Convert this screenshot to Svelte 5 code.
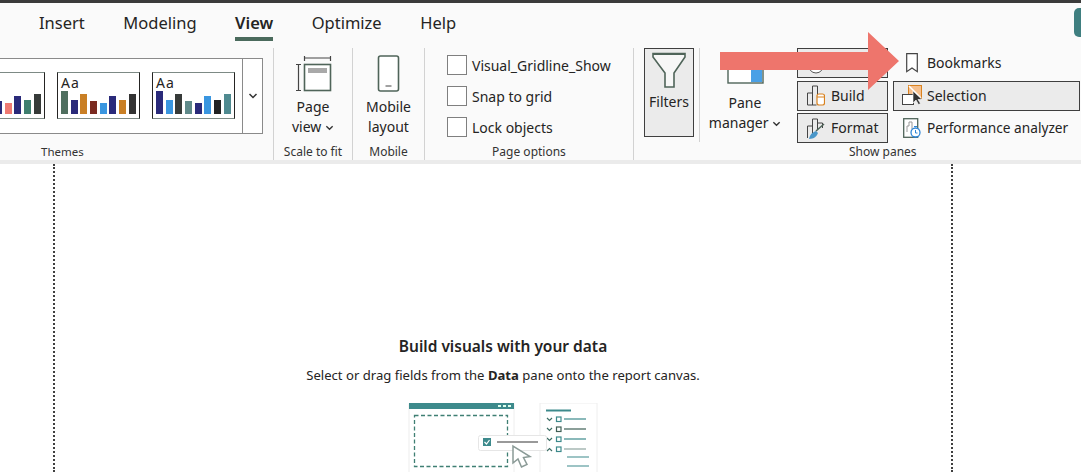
<script lang="ts">
  const tabs = ['Insert', 'Modeling', 'View', 'Optimize', 'Help'];
  const heights = [23, 14, 20, 13, 11, 18, 14, 20];
  const themes = [
    ['#4f6f5f', '#2a2a7a', '#c97f25', '#2a2a7a', '#ef7a72', '#2a2a7a', '#3f7f6f', '#373b39'],
    ['#4f6f5f', '#2a2a7a', '#c97f25', '#7a2a20', '#3a96e0', '#2a2a7a', '#c97f25', '#333333'],
    ['#2a2a7a', '#3a96e0', '#373b39', '#5f8a8a', '#2a2a7a', '#3a96e0', '#222222', '#4f8a90'],
  ];
  const options = ['Visual_Gridline_Show', 'Snap to grid', 'Lock objects'];
  const fieldRows = [419, 429, 439, 449];
</script>

<div class="app">
  <div class="topbar"></div>

  <div class="ribbon">
    <nav class="tabs">
      {#each tabs as tab}
        <span class="tab" class:active={tab === 'View'}>{tab}</span>
      {/each}
      <span class="account"></span>
    </nav>

    <div class="groups">
      <section class="group themes">
        <div class="body">
          <div class="gallery">
            <div class="cards">
              {#each themes as colors, t}
                <div class="card">
                  {#if t > 0}<span class="aa">Aa</span>{/if}
                  <div class="bars">
                    {#each colors as c, i}
                      <i style="height:{heights[i]}px;background:{c}"></i>
                    {/each}
                  </div>
                </div>
              {/each}
            </div>
            <div class="more">
              <svg width="10" height="6" viewBox="0 0 10 6"><path d="M1.5 1 5 4.5 8.5 1" class="chev" /></svg>
            </div>
          </div>
        </div>
        <div class="label themes-label">Themes</div>
      </section>

      <section class="group scale">
        <div class="body big">
          <svg width="37" height="37" viewBox="0 0 37 37">
            <path d="M9.5 1v5M35.5 1v5M9.5 3h26M1 9.5h5M1 35.5h5M3.5 9.5v26" fill="none" stroke="#444" stroke-width="1.2" />
            <rect x="9.5" y="9.5" width="26" height="26" fill="#fff" stroke="#4f6459" stroke-width="1.6" />
            <rect x="13" y="13" width="19" height="5" fill="#a9a9a9" />
          </svg>
          <span class="big-text">Page<br />view <svg class="inline" width="9" height="6" viewBox="0 0 10 6"><path d="M1.5 1 5 4.5 8.5 1" class="chev" /></svg></span>
        </div>
        <div class="label">Scale to fit</div>
      </section>

      <section class="group mobile">
        <div class="body big">
          <svg width="23" height="37" viewBox="0 0 23 37">
            <rect x="1.5" y="1" width="20" height="35" rx="2" fill="#fff" stroke="#4f6459" stroke-width="1.6" />
            <path d="M8.5 31h6" stroke="#444" stroke-width="1" />
          </svg>
          <span class="big-text">Mobile<br />layout</span>
        </div>
        <div class="label">Mobile</div>
      </section>

      <section class="group options">
        <div class="body checks">
          {#each options as opt}
            <div class="check"><span class="box"></span><span class="opt">{opt}</span></div>
          {/each}
        </div>
        <div class="label">Page options</div>
      </section>

      <section class="group panes">
        <div class="body panes-body">
          <div class="filters">
            <svg width="34" height="36" viewBox="0 0 34 36">
              <path d="M1 1.500h32v3.500L22 21v14h-9V21L1 5z" fill="#f7f7f7" stroke="#4f6459" stroke-width="1.600" />
              <path d="M1 2h32" stroke="#4f6459" stroke-width="2" />
            </svg>
            <span>Filters</span>
          </div>
          <div class="pane-manager">
            <svg width="37" height="32" viewBox="0 0 37 32">
              <rect x="1" y="1" width="35" height="30" fill="#fff" stroke="#4f6459" stroke-width="1.4" />
              <rect x="24" y="2" width="11" height="28" fill="#4aa0e6" />
            </svg>
            <span class="big-text">Pane<br />manager <svg class="inline" width="9" height="6" viewBox="0 0 10 6"><path d="M1.5 1 5 4.5 8.5 1" class="chev" /></svg></span>
          </div>
          <div class="col-left">
            <div class="pane on">
              <svg width="18" height="22" viewBox="0 0 18 22"><ellipse cx="9" cy="12" rx="8" ry="9" fill="#fff" stroke="#555" /></svg>
              <span>Data</span>
            </div>
            <div class="pane on">
              <svg width="18" height="22" viewBox="0 0 18 22">
                <path d="M.5 21V9h5V2h5v9M5.5 9v12M.5 21h9" fill="none" stroke="#444" />
                <rect x="10" y="10" width="7.5" height="11" rx="2" fill="#fff" stroke="#d9821f" stroke-width="1.2" />
                <path d="M10 13h7.5" stroke="#d9821f" />
              </svg>
              <span>Build</span>
            </div>
            <div class="pane on">
              <svg width="18" height="24" viewBox="0 0 18 24">
                <path d="M.5 22V10h5V3h5v11M10.5 7h5v5" fill="none" stroke="#444" />
                <path d="M5.5 10v9" stroke="#444" />
                <path d="M2 23c1-5 4-7 7-8l2 2c-1 3-4 6-9 6z" fill="#4b97c9" />
                <path d="M9 15 17 8" stroke="#4f6459" stroke-width="1.6" />
              </svg>
              <span>Format</span>
            </div>
          </div>
          <div class="col-right">
            <div class="pane wide">
              <span class="ico"><svg width="12" height="20" viewBox="0 0 12 20"><path d="M.7.7h10.6v18L6 15 .7 18.700z" fill="#fff" stroke="#444" stroke-width="1.2" /></svg></span>
              <span>Bookmarks</span>
            </div>
            <div class="pane wide on">
              <span class="ico"><svg width="20" height="20" viewBox="0 0 20 20">
                <rect x="6.500" y="0.500" width="13" height="13" fill="#f6c08e" stroke="#d9821f" />
                <path d="M7 1 19 13" stroke="#fff" stroke-width="1.500" />
                <rect x="0.500" y="9.500" width="11" height="10" fill="#fff" stroke="#444" />
                <path d="M11 6v12l3-3 2.500 4.500 2-1-2.500-4h4z" fill="#333" stroke="#fff" stroke-width=".6" />
              </svg></span>
              <span>Selection</span>
            </div>
            <div class="pane wide">
              <span class="ico"><svg width="18" height="20" viewBox="0 0 18 20">
                <rect x="0.700" y="0.700" width="14" height="18.600" fill="#fff" stroke="#4f6459" stroke-width="1.3" />
                <path d="M4 14V8h2V4h3v7" fill="none" stroke="#999" />
                <circle cx="12.500" cy="14.500" r="4.500" fill="#fff" stroke="#2f86d6" stroke-width="1.300" />
                <path d="M12.500 12v3h2M11 8.500h3" fill="none" stroke="#2f86d6" />
              </svg></span>
              <span class="perf">Performance analyzer</span>
            </div>
          </div>
        </div>
        <div class="label panes-label">Show panes</div>
      </section>
    </div>
  </div>

  <main class="canvas">
    <div class="page">
      <h2>Build visuals with your data</h2>
      <p>Select or drag fields from the <b>Data</b> pane onto the report canvas.</p>
      <svg class="art" width="190" height="69" viewBox="408 403 190 69">
        <rect x="409" y="404" width="105" height="70" fill="#fff" stroke="#eee" />
        <rect x="409" y="403" width="105" height="6" fill="#3d8a8c" />
        <path d="M498 406h3M503 406h3M508 406h3" stroke="#dfe" stroke-width="2" />
        <rect x="414.500" y="415.500" width="93" height="51" fill="none" stroke="#3f7f73" stroke-width="1.300" stroke-dasharray="4 2.500" />
        <rect x="540" y="403" width="57" height="72" fill="#fff" stroke="#eee" />
        <path d="M546 410.500h25" stroke="#3d8a8c" stroke-width="2" />
        {#each fieldRows as y, i}
          <path d={i === 3 ? `M547 ${y + 2}l2.500-2.500 2.500 2.500` : `M547 ${y - 1}l2.500 2.500 2.500-2.500`} fill="none" stroke="#3f6f66" stroke-width="1.200" />
          <rect x="556.500" y={y - 2} width="4.500" height="4.500" fill="#fff" stroke={i === 1 ? '#3f5f55' : '#3d8a8c'} stroke-width="1.200" />
          <path d="M564 {y}h22" stroke={i === 1 ? '#3f5f55' : i === 3 ? '#8fa5a0' : '#3d8a8c'} stroke-width="1.200" />
        {/each}
        <path d="M567 457h22M567 466h22" stroke="#3d8a8c" stroke-width="1.200" />
        <rect x="478.500" y="435.500" width="68" height="15" rx="2" fill="#fff" stroke="#e6e6e6" />
        <rect x="483" y="438" width="8" height="8" fill="#3d8a8c" />
        <path d="M484.500 442l2 2 3-4" fill="none" stroke="#fff" stroke-width="1.200" />
        <path d="M497 442h41" stroke="#777" stroke-width="1.500" />
        <path d="M513 446v17l5-4 3.500 8 5.500-2.500-3.500-7 6.500-1z" fill="#fff" stroke="#8a9a96" stroke-width="1.500" />
      </svg>
    </div>
  </main>

  <svg class="arrow" width="180" height="60" viewBox="720 31 180 60">
    <path d="M720 52h148V32l31 29-31 29V70H720z" fill="#ee756c" />
  </svg>
</div>

<style>
  :global(body) { margin: 0; background: #fff; }
  .app { position: relative; width: 1081px; height: 472px; overflow: hidden; font-family: "Noto Sans", "Open Sans", sans-serif; color: #252423; }
  .topbar { height: 3px; background: #3b3b3b; }

  .ribbon { height: 157px; background: #fafafa; border-bottom: 4px solid #ebebeb; box-shadow: 0 1px 1px #f4f4f4; }
  .tabs { display: flex; align-items: flex-start; gap: 38.500px; height: 43px; padding-left: 39px; font-size: 16.500px; box-sizing: border-box; }
  .tab { padding-top: 9px; height: 25px; line-height: 22px; border-bottom: 4px solid transparent; }
  .tab.active { font-weight: 600; border-bottom-color: #4a6a5c; }
  .account { margin-left: auto; width: 7px; height: 29px; margin-top: 5px; background: #3f7f80; border-radius: 5px 0 0 5px; }

  .groups { display: flex; height: 114px; }
  .group { display: flex; flex-direction: column; box-sizing: border-box; border-right: 1px solid #d2d2d2; margin-top: 2px; }
  .body { height: 94px; flex: none; }
  .label { height: 18px; line-height: 20px; font-size: 12px; text-align: center; color: #333; }

  .themes { width: 274px; }
  .themes-label { text-align: left; padding-left: 41px; font-size: 11.500px; }
  .gallery { display: flex; width: 263px; height: 76px; margin-top: 10px; box-sizing: border-box; border: 1px solid #8a8a8a; border-left: 0; background: #fff; }
  .cards { display: flex; justify-content: flex-end; gap: 12px; width: 242px; padding: 13px 7px 0 0; box-sizing: border-box; overflow: hidden; }
  .card { flex: none; position: relative; width: 83px; height: 47px; box-sizing: border-box; border: 1px solid #252423; border-top-color: #7d8a85; border-bottom-color: #7d8a85; background: #fff; }
  .aa { position: absolute; left: 3px; top: 1px; font-size: 14px; letter-spacing: 1px; line-height: 17px; }
  .bars { position: absolute; left: 3px; bottom: 4px; display: flex; align-items: flex-end; gap: 2.700px; }
  .bars i { display: block; width: 7px; }
  .more { flex: 1; display: flex; align-items: center; justify-content: center; border-left: 1px solid #8a8a8a; }
  .chev { fill: none; stroke: #333; stroke-width: 1.500; }

  .scale { width: 79px; }
  .mobile { width: 72px; }
  .big { display: flex; flex-direction: column; align-items: center; padding-top: 7px; text-align: center; box-sizing: border-box; }
  .big-text { display: block; font-size: 14px; line-height: 20px; margin-top: 5px; white-space: nowrap; }
  .inline { vertical-align: 1px; }

  .options { width: 209px; }
  .checks { display: flex; flex-direction: column; gap: 11px; padding: 7px 0 0 22px; box-sizing: border-box; }
  .check { display: flex; align-items: center; gap: 5px; height: 20px; font-size: 14px; white-space: nowrap; }
  .opt { margin-top: 1px; }
  .box { width: 18px; height: 18px; border: 1px solid #7f7f7f; background: #fff; }

  .panes { flex: 1; border-right: 0; }
  .panes-body { display: flex; }
  .panes-label { text-align: left; padding-left: 215px; }
  .filters { width: 50px; height: 89px; margin-left: 10px; box-sizing: border-box; border: 1px solid #3f3f3f; background: #ebebeb; display: flex; flex-direction: column; align-items: center; padding-top: 3px; font-size: 14px; }
  .filters span { margin-top: 4px; }
  .pane-manager { width: 91px; height: 94px; margin-left: 5px; box-sizing: border-box; border-left: 1px solid #d2d2d2; display: flex; flex-direction: column; align-items: center; padding-top: 4px; text-align: center; }
  .pane-manager .big-text { margin-top: 9px; }
  .col-left { display: flex; flex-direction: column; gap: 2.500px; width: 91px; margin-left: 7px; }
  .col-right { display: flex; flex-direction: column; gap: 2.500px; width: 187px; margin-left: 5px; }
  .pane { flex: none; display: flex; align-items: center; gap: 6px; height: 30px; box-sizing: border-box; padding: 0 0 1px 9px; border: 1px solid transparent; font-size: 14px; white-space: nowrap; }
  .pane.on { background: #ebebeb; border-color: #3f3f3f; }
  .pane.wide { padding-left: 8px; gap: 5px; }
  .ico { flex: none; width: 20px; display: flex; justify-content: center; }
  .perf { font-size: 13.700px; }

  .canvas { height: 308px; background: #fff; }
  .page { width: 900px; height: 308px; margin-left: 53px; box-sizing: border-box; border-left: 2px dotted #3f3f3f; border-right: 2px dotted #3f3f3f; display: flex; flex-direction: column; align-items: center; }
  h2 { margin: 172px 0 0; font-size: 15.500px; line-height: 20px; font-weight: 600; }
  p { margin: 10px 0 0; font-size: 13.100px; line-height: 18px; }
  p b { font-weight: 700; }
  .art { display: block; margin-top: 19px; flex: none; }

  .arrow { position: absolute; left: 720px; top: 31px; }
</style>
